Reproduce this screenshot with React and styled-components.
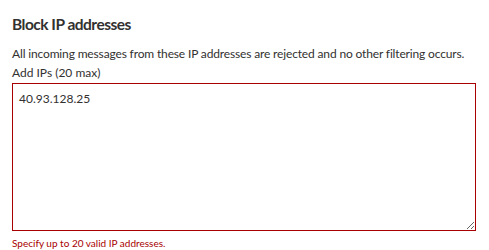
import React, { useState } from 'react'
import styled, { createGlobalStyle } from 'styled-components'

const GlobalStyle = createGlobalStyle`
  html, body {
    margin: 0;
    padding: 0;
    background: #ffffff;
  }
  body {
    font-family: Lato, "Open Sans", "Liberation Sans", sans-serif;
    color: #323130;
  }
`

const Panel = styled.div`
  display: flex;
  flex-direction: column;
  padding: 13px 13px 0 12px;
  width: 464px;
`

const Title = styled.h2`
  margin: 0;
  font-size: 15.5px;
  line-height: 22px;
  font-weight: 700;
  letter-spacing: -0.5px;
  color: #323130;
`

const Desc = styled.p`
  margin: 10px 0 0 0;
  font-size: 12px;
  line-height: 18px;
  letter-spacing: -0.15px;
  white-space: nowrap;
  color: #323130;
`

const Label = styled.label`
  margin-top: 1px;
  font-size: 12px;
  line-height: 18px;
  color: #323130;
`

const Field = styled.textarea`
  margin-top: 1px;
  box-sizing: border-box;
  width: 464px;
  height: 148px;
  padding: 7px 6px;
  border: 1px solid ${({ $invalid }) => ($invalid ? '#a80000' : '#8a8886')};
  border-radius: 0;
  outline: none;
  resize: vertical;
  font-family: Lato, "Open Sans", "Liberation Sans", sans-serif;
  font-size: 12px;
  line-height: 16px;
  color: #323130;
`

const Error = styled.div`
  margin-top: 5px;
  font-size: 10px;
  line-height: 14px;
  color: #a80000;
`

export default function App() {
  const [value, setValue] = useState('40.93.128.25')
  return (
    <>
      <GlobalStyle />
      <Panel>
        <Title>Block IP addresses</Title>
        <Desc>All incoming messages from these IP addresses are rejected and no other filtering occurs.</Desc>
        <Label htmlFor="ips">Add IPs (20 max)</Label>
        <Field id="ips" $invalid value={value} onChange={(e) => setValue(e.target.value)} />
        <Error>Specify up to 20 valid IP addresses.</Error>
      </Panel>
    </>
  )
}
